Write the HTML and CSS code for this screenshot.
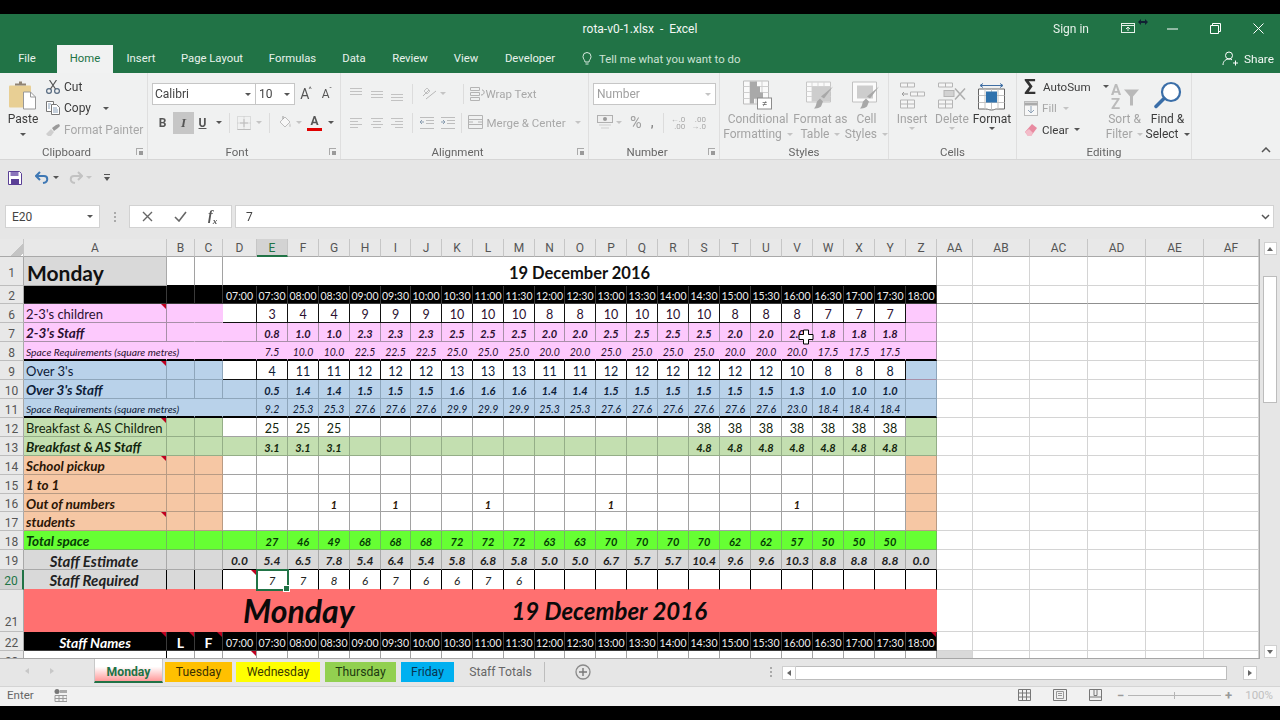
FILE: index.html
```html
<!DOCTYPE html>
<html lang="en">
<head>
<meta charset="utf-8">
<title>rota-v0-1.xlsx - Excel</title>
<link rel="stylesheet" href="styles.css">
</head>
<body>
<div class="app">
  <header class="titlebar">
    <div class="t-left"></div>
    <div class="t-title">rota-v0-1.xlsx &nbsp;-&nbsp; Excel</div>
    <div class="t-right">
      <span class="signin">Sign in</span>
      <svg class="t-disp" width="14" height="11" viewBox="0 0 14 11"><rect x=".5" y=".5" width="13" height="9" fill="none" stroke="#e6f1ea"/><path d="M.5 2.5h13M7 8V4M5 6l2-2 2 2" fill="none" stroke="#e6f1ea"/></svg>
      <svg class="t-resize" width="10" height="6" viewBox="0 0 10 6"><path d="M0 3l3-3v2h4V0l3 3-3 3V4H3v2z" fill="#123"/></svg>
      <svg class="t-min" width="11" height="2" viewBox="0 0 11 2"><path d="M0 1h11" stroke="#fff"/></svg>
      <svg class="t-rest" width="11" height="11" viewBox="0 0 11 11"><path d="M.5 2.5h8v8h-8zM2.5 2.5v-2h8v8h-2" fill="none" stroke="#fff"/></svg>
      <svg class="t-close" width="11" height="11" viewBox="0 0 11 11"><path d="M.5.5l10 10M10.5.5l-10 10" stroke="#fff"/></svg>
    </div>
  </header>

  <nav class="tabsbar">
    <span class="tab tab-file">File</span>
    <span class="tab tab-home">Home</span>
    <span class="tab tab-ins">Insert</span>
    <span class="tab tab-page">Page Layout</span>
    <span class="tab tab-form">Formulas</span>
    <span class="tab tab-data">Data</span>
    <span class="tab tab-rev">Review</span>
    <span class="tab tab-view">View</span>
    <span class="tab tab-dev">Developer</span>
    <span class="tell">
      <svg width="10" height="14" viewBox="0 0 10 14"><path d="M3 10C3 8 1 7 1 4.500a4 4 0 018 0C9 7 7 8 7 10zM3.500 12h3" fill="none" stroke="#d8eadf"/></svg>
      Tell me what you want to do
    </span>
    <span class="share">
      <svg width="16" height="15" viewBox="0 0 16 15"><circle cx="7" cy="4.500" r="3.500" fill="none" stroke="#fff"/><path d="M1 14c0-4 3-6 6-6 1 0 2 .2 3 .8M11 12h5M13.500 9.500v5" fill="none" stroke="#fff"/></svg>
      Share
    </span>
  </nav>

  <section class="ribbon">
    <div class="grp g-clip">
      <div class="body">
        <div class="big b-paste">
          <svg width="28" height="29" viewBox="0 0 28 29"><rect x="0" y="4" width="22" height="22" rx="1" fill="#e8cf94"/><path d="M6 4V2h4V0h3v2h4v2z" fill="#8f8374"/><path d="M14.500 10.500h7l5 5v12h-12z" fill="#fff" stroke="#989898"/><path d="M21.500 10.500v5h5" fill="none" stroke="#989898"/></svg>
          <span class="blabel dark">Paste</span>
          <span class="caret"></span>
        </div>
        <div class="rows3">
          <div class="s-row"><svg width="14" height="14" viewBox="0 0 14 14"><circle cx="3" cy="11" r="2.400" fill="none" stroke="#566a80" stroke-width="1.200"/><circle cx="11" cy="11" r="2.400" fill="none" stroke="#566a80" stroke-width="1.200"/><path d="M4.500 9L10.500 0M9.500 9L3.500 0" stroke="#555" stroke-width="1.200"/></svg><span class="dark">Cut</span></div>
          <div class="s-row"><svg width="14" height="14" viewBox="0 0 14 14"><path d="M.5.5h7v10h-7z" fill="#fff" stroke="#777"/><path d="M5.500 3.500h5l3 3v7h-8z" fill="#fff" stroke="#777"/><path d="M2 3h3M2 5h2M2 7h2M7 7h4M7 9h5M7 11h5" stroke="#8aa0b8"/></svg><span class="dark">Copy</span><span class="caret c-copy"></span></div>
          <div class="s-row muted"><svg width="14" height="12" viewBox="0 0 14 12"><path d="M0 10l5-5 3 3-3 4H2z" fill="#cfcfcf"/><path d="M6 4l4-3 3-1 1 2-2 2-4 3z" fill="#9a9a9a"/></svg><span>Format Painter</span></div>
        </div>
      </div>
      <div class="glabel"><i></i><span>Clipboard</span><b class="launch"></b></div>
    </div>

    <div class="grp g-font">
      <div class="body col2">
        <div class="r22">
          <div class="combo c-font"><span>Calibri</span><span class="caret"></span></div>
          <div class="combo c-size"><span>10</span><span class="caret"></span></div>
          <span class="grow"><span class="gA">A</span><sup>^</sup></span>
          <span class="grow shrink"><span class="gA">A</span><sup>ˇ</sup></span>
        </div>
        <div class="r22 r-fmt">
          <span class="fbtn bold">B</span>
          <span class="fbtn ital on">I</span>
          <span class="fbtn und">U</span>
          <span class="caret cm1"></span>
          <i class="vsep s1"></i>
          <svg class="ic-border" width="14" height="14" viewBox="0 0 14 14"><path d="M.5.5h13v13H.5zM7 .5v13M.5 7h13" fill="none" stroke="#c4c4c4" stroke-dasharray="1 1"/><path d="M.5 13.500h13M7 3v8M3 7h8" stroke="#bdbdbd"/></svg>
          <span class="caret light cm2"></span>
          <i class="vsep s2"></i>
          <svg class="ic-fill" width="15" height="15" viewBox="0 0 15 15"><path d="M3 7l5-5 5 5-5 5z" fill="#f7f7f7" stroke="#bcbcbc"/><path d="M6 4V1" stroke="#999"/><path d="M13 8c1 2 1 4 0 4s-1-2 0-4z" fill="#c8c8c8"/></svg>
          <span class="caret light cm3"></span>
          <span class="fcol">A</span>
          <span class="caret cm4"></span>
        </div>
      </div>
      <div class="glabel"><i></i><span>Font</span><b class="launch"></b></div>
    </div>

    <div class="grp g-align">
      <div class="body col2">
        <div class="r22 al-r1">
          <svg class="ai" width="14" height="14" viewBox="0 0 14 14"><path d="M1 1.500h12M1 4.500h12M1 7.500h12" stroke="#c2c2c2"/></svg>
          <svg class="ai" width="14" height="14" viewBox="0 0 14 14"><path d="M1 4.500h12M1 7.500h12M1 10.500h12" stroke="#c2c2c2"/></svg>
          <svg class="ai" width="14" height="14" viewBox="0 0 14 14"><path d="M1 7.500h12M1 10.500h12M1 13.500h12" stroke="#c2c2c2"/></svg>
          <i class="vsep s3"></i>
          <svg class="orient" width="15" height="14" viewBox="0 0 15 14"><path d="M1 9l6-6M4 12l10-8" stroke="#b8b8b8"/><path d="M2 4l3-3 3 3-3 3z" fill="none" stroke="#c4c4c4"/></svg>
          <span class="caret light cm5"></span>
          <i class="vsep s4"></i>
          <svg class="wr" width="16" height="14" viewBox="0 0 16 14"><path d="M.5.500h9v3h-9zM.5 5.500h9v3h-9zM.5 10.500h9v3h-9z" fill="none" stroke="#b4b4b4"/><path d="M11 8c4 0 4-5 1-5" fill="none" stroke="#a5a5a5"/></svg>
          <span class="muted wtx">Wrap Text</span>
        </div>
        <div class="r22 al-r2">
          <svg class="ai" width="14" height="14" viewBox="0 0 14 14"><path d="M1 2.500h12M1 5.500h8M1 8.500h12M1 11.500h8" stroke="#c2c2c2"/></svg>
          <svg class="ai" width="14" height="14" viewBox="0 0 14 14"><path d="M1 2.500h12M3 5.500h8M1 8.500h12M3 11.500h8" stroke="#c2c2c2"/></svg>
          <svg class="ai" width="14" height="14" viewBox="0 0 14 14"><path d="M1 2.500h12M5 5.500h8M1 8.500h12M5 11.500h8" stroke="#c2c2c2"/></svg>
          <i class="vsep s3"></i>
          <svg class="ind" width="15" height="14" viewBox="0 0 15 14"><path d="M1 1.500h14M7 4.500h8M7 7.500h8M1 12.500h14" stroke="#bdbdbd"/><path d="M5 6H1m2-2L1 6l2 2" fill="none" stroke="#8a9db0"/></svg>
          <svg class="ind i2" width="15" height="14" viewBox="0 0 15 14"><path d="M1 1.500h14M7 4.500h8M7 7.500h8M1 12.500h14" stroke="#bdbdbd"/><path d="M1 6h4M3 4l2 2-2 2" fill="none" stroke="#8a9db0"/></svg>
          <i class="vsep s4b"></i>
          <svg class="wr" width="16" height="15" viewBox="0 0 16 15"><path d="M.5.500h14v13H.5zM.5 4.500h14M.5 9.500h14M5 7H1m13 0h-4" fill="none" stroke="#b4b4b4"/></svg>
          <span class="muted wtx">Merge &amp; Center</span>
          <span class="caret light cm6"></span>
        </div>
      </div>
      <div class="glabel"><i></i><span>Alignment</span><b class="launch"></b></div>
    </div>

    <div class="grp g-num">
      <div class="body col2">
        <div class="r22"><div class="combo c-num"><span>Number</span><span class="caret light"></span></div></div>
        <div class="r22 num-r">
          <svg class="curr" width="16" height="16" viewBox="0 0 16 16"><rect x=".5" y=".5" width="15" height="7" fill="#efefef" stroke="#b0b0b0"/><circle cx="8" cy="4" r="2" fill="#9a9a9a"/><path d="M2 10h12M4 13h8" stroke="#cfcfcf"/></svg>
          <span class="caret light cm7"></span>
          <span class="pct">%</span>
          <span class="cmm">,</span>
          <i class="vsep s5"></i>
          <span class="dec"><span>←.0</span><span>.00</span></span>
          <span class="dec d2"><span>.00</span><span>→.0</span></span>
        </div>
      </div>
      <div class="glabel"><i></i><span>Number</span><b class="launch"></b></div>
    </div>

    <div class="grp g-styles">
      <div class="body row">
        <div class="big w-cf">
          <svg width="30" height="30" viewBox="0 0 30 30"><path d="M.5.500h25v23H.5z" fill="#fafafa" stroke="#bdbdbd"/><path d="M.5 6h25M.5 12h25M.5 18h25M7 .5v23M13 .5v23M19 .5v23" stroke="#cfcfcf"/><path d="M7 1h7v5H7zM7 6h10v6H7zM7 12h13v6H7zM7 18h4v5H7z" fill="#a9a9a9"/><rect x="14.500" y="17.500" width="14" height="11" fill="#fff" stroke="#8c8c8c"/><text x="21.500" y="26.500" font-size="10" text-anchor="middle" fill="#666" font-family="Roboto">≠</text></svg>
          <span class="blabel">Conditional</span><span class="blabel">Formatting<span class="caret light inl"></span></span>
        </div>
        <div class="big w-ft">
          <svg width="28" height="30" viewBox="0 0 28 30"><path d="M.5 1.500h24v20H.5z" fill="#fafafa" stroke="#c6c6c6"/><path d="M.5 6h24M.5 11h24M.5 16h24M6 1.500v20M12 1.500v20M18 1.500v20" stroke="#d6d6d6"/><path d="M6 6h18v15H6z" fill="#cdcdcd"/><path d="M27 6L18 18l-3-2zM14 18l3 3-2 5c-3 2-5 2-7 2 2-2 2-4 3-7z" fill="#a8a8a8"/></svg>
          <span class="blabel">Format as</span><span class="blabel">Table<span class="caret light inl"></span></span>
        </div>
        <div class="big w-cs">
          <svg width="28" height="30" viewBox="0 0 28 30"><path d="M.5 1.500h24v20H.5z" fill="#fbfbfb" stroke="#c0c0c0"/><path d="M5 5h16v13H5z" fill="#cdcdcd"/><path d="M27 6L18 18l-3-2zM14 18l3 3-2 5c-3 2-5 2-7 2 2-2 2-4 3-7z" fill="#a8a8a8"/></svg>
          <span class="blabel">Cell</span><span class="blabel">Styles<span class="caret light inl"></span></span>
        </div>
      </div>
      <div class="glabel center"><span>Styles</span></div>
    </div>

    <div class="grp g-cells">
      <div class="body row">
        <div class="big w-c">
          <svg width="26" height="28" viewBox="0 0 26 28"><path d="M1.500 1.500h14v4h-14zM8.500 1.500v4M11.500 10.500h14v4h-14zM18.500 10.500v4M1.500 18.500h14v8h-14zM8.500 18.500v8M1.500 22.500h14" fill="#f5f5f5" stroke="#b5b5b5"/><path d="M9 12.500H3M5 10.500l-2 2 2 2" fill="none" stroke="#9c9c9c"/></svg>
          <span class="blabel">Insert</span><span class="caret light"></span>
        </div>
        <div class="big w-c">
          <svg width="30" height="28" viewBox="0 0 30 28"><path d="M1.500 1.500h14v4h-14zM8.500 1.500v4M1.500 18.500h14v8h-14zM8.500 18.500v8M1.500 22.500h14" fill="#f5f5f5" stroke="#b5b5b5"/><rect x="7" y="9" width="10" height="6" fill="#d2d2d2" stroke="#b5b5b5"/><path d="M18 7l10 11M28 7L18 18" stroke="#aeaeae" stroke-width="1.500"/></svg>
          <span class="blabel">Delete</span><span class="caret light"></span>
        </div>
        <div class="big w-c">
          <svg width="28" height="30" viewBox="0 0 28 30"><path d="M2.500 5h22M5 3L2 5l3 2M22 3l3 2-3 2" fill="none" stroke="#3f6ea3"/><path d="M.5 8.500h26v20h-8c-2 0-2 1-5 1s-3-1-6-1H.5z" fill="#fff" stroke="#666"/><path d="M7 8.500v20M20 8.500v20M.5 15h26M.5 22h26M13.500 8.500v20" stroke="#c3c3c3"/><rect x="8" y="11" width="11" height="11" fill="#2f72ad"/></svg>
          <span class="blabel dark">Format</span><span class="caret"></span>
        </div>
      </div>
      <div class="glabel center"><span>Cells</span></div>
    </div>

    <div class="grp g-edit">
      <div class="body row">
        <div class="rows3 ed3">
          <div class="s-row sig"><span class="sigma">Σ</span><span class="dark">AutoSum</span><span class="caret c-auto"></span></div>
          <div class="s-row muted"><svg width="14" height="15" viewBox="0 0 14 15"><rect x=".5" y=".5" width="13" height="14" fill="#f7f7f7" stroke="#bbb"/><path d="M.5 3h13" stroke="#aaa" stroke-width="3"/><path d="M7 5v7M4 9l3 3 3-3" fill="none" stroke="#8fa3b8"/></svg><span>Fill</span><span class="caret light c-fill"></span></div>
          <div class="s-row"><svg width="14" height="14" viewBox="0 0 14 14"><path d="M1 9l7-8 5 4-6 8H4z" fill="#e88aa0"/><path d="M1 9l3 4h3l2-3-4-4z" fill="#f3bcc9"/></svg><span class="dark">Clear</span><span class="caret c-clear"></span></div>
        </div>
        <div class="big w-sf">
          <svg width="30" height="28" viewBox="0 0 30 28"><text x="1" y="13" font-size="15" fill="#bbb" font-family="Roboto" font-weight="700">A</text><text x="1" y="27" font-size="15" fill="#bbb" font-family="Roboto" font-weight="700">Z</text><path d="M14 8h15l-6 7v9h-3v-9z" fill="#b9b9b9"/></svg>
          <span class="blabel">Sort &amp;</span><span class="blabel">Filter<span class="caret light inl"></span></span>
        </div>
        <div class="big w-fs">
          <svg width="28" height="28" viewBox="0 0 28 28"><circle cx="17" cy="10.500" r="9" fill="#fff" stroke="#3a6ea8" stroke-width="2.200"/><path d="M10 17L2 25" stroke="#3a6ea8" stroke-width="3.500" stroke-linecap="round"/></svg>
          <span class="blabel dark">Find &amp;</span><span class="blabel dark">Select<span class="caret inl"></span></span>
        </div>
      </div>
      <div class="glabel center"><span>Editing</span></div>
    </div>

    <div class="collapse"><svg width="10" height="6" viewBox="0 0 10 6"><path d="M1 5l4-4 4 4" fill="none" stroke="#555" stroke-width="1.500"/></svg></div>
  </section>

  <div class="qat">
    <svg width="14" height="14" viewBox="0 0 14 14"><path d="M.5.500h11l2 2v11H.5z" fill="#fff" stroke="#5a3f96"/><path d="M2.500 1h8v4h-8z" fill="#8c76bb"/><path d="M3 8h8v5.500H3z" fill="#5a3f96"/></svg>
    <svg class="q-undo" width="15" height="13" viewBox="0 0 15 13"><path d="M5 1L1 5l4 4" fill="none" stroke="#3f78b4" stroke-width="2"/><path d="M1 5h8c4 0 5 6-1 7" fill="none" stroke="#3f78b4" stroke-width="2"/></svg>
    <span class="caret c-u"></span>
    <svg class="q-redo" width="15" height="13" viewBox="0 0 15 13"><path d="M10 1l4 4-4 4" fill="none" stroke="#c2c2c2" stroke-width="2"/><path d="M14 5H6C2 5 1 11 7 12" fill="none" stroke="#c2c2c2" stroke-width="2"/></svg>
    <span class="caret light c-r"></span>
    <svg class="q-cust" width="6" height="7" viewBox="0 0 6 7"><path d="M0 .5h6" stroke="#555"/><path d="M0 3h6l-3 4z" fill="#555"/></svg>
  </div>

  <div class="fbar">
    <div class="namebox"><span>E20</span><span class="caret"></span></div>
    <span class="grip"></span>
    <div class="fxbox">
      <svg width="11" height="11" viewBox="0 0 11 11"><path d="M1 1l9 9M10 1l-9 9" stroke="#666" stroke-width="1.400"/></svg>
      <svg width="13" height="11" viewBox="0 0 13 11"><path d="M1 6l4 4 7-9" fill="none" stroke="#666" stroke-width="1.600"/></svg>
      <span class="fx">f<sub>x</sub></span>
    </div>
    <div class="finput"><span>7</span><svg width="9" height="6" viewBox="0 0 9 6"><path d="M1 1l3.500 3.500L8 1" fill="none" stroke="#555" stroke-width="1.500"/></svg></div>
  </div>

  <main class="sheetarea">
    <div class="gridwrap">
      <table class="sheet">
        <colgroup>
          <col class="w24"><col class="w143"><col class="w28"><col class="w28"><col class="w34">
          <col class="w31"><col class="w31"><col class="w31"><col class="w31"><col class="w30"><col class="w31"><col class="w31"><col class="w31"><col class="w31"><col class="w30"><col class="w31"><col class="w31"><col class="w31"><col class="w31"><col class="w31"><col class="w31"><col class="w31"><col class="w31"><col class="w31"><col class="w31"><col class="w31"><col class="w31">
          <col class="w36"><col class="w57"><col class="w58"><col class="w58"><col class="w58"><col class="w55">
        </colgroup>
        <tr class="chead"><th class="corner"><th>A<th>B<th>C<th>D<th class="csel">E<th>F<th>G<th>H<th>I<th>J<th>K<th>L<th>M<th>N<th>O<th>P<th>Q<th>R<th>S<th>T<th>U<th>V<th>W<th>X<th>Y<th>Z<th>AA<th>AB<th>AC<th>AD<th>AE<th>AF</tr>
        <tr class="h29 first"><th>1<td class="mon">Monday<td><td><td class="ttl" colspan="23">19 December 2016<td class="e"><td class="e"><td class="e"><td class="e"><td class="e"><td class="e"></tr>
        <tr class="h18 kk"><th>2<td><td><td><td>07:00<td>07:30<td>08:00<td>08:30<td>09:00<td>09:30<td>10:00<td>10:30<td>11:00<td>11:30<td>12:00<td>12:30<td>13:00<td>13:30<td>14:00<td>14:30<td>15:00<td>15:30<td>16:00<td>16:30<td>17:00<td>17:30<td>18:00<td><td><td><td><td><td></tr>
        <tr class="h19 pink box num"><th>6<td class="lab cm">2-3's children<td><td><td><td>3<td>4<td>4<td>9<td>9<td>9<td>10<td>10<td>10<td>8<td>8<td>10<td>10<td>10<td>10<td>8<td>8<td>8<td>7<td>7<td>7<td><td><td><td><td><td><td></tr>
        <tr class="h19 pink bi"><th>7<td class="lab">2-3's Staff<td><td><td><td>0.8<td>1.0<td>1.0<td>2.3<td>2.3<td>2.3<td>2.5<td>2.5<td>2.5<td>2.0<td>2.0<td>2.5<td>2.5<td>2.5<td>2.5<td>2.0<td>2.0<td>2.0<td>1.8<td>1.8<td>1.8<td><td><td><td><td><td><td></tr>
        <tr class="h19 pink it thick"><th>8<td class="lab tiny nr">Space Requirements (square metres)<td class="nr"><td class="nr"><td class="nr"><td class="nr">7.5<td class="nr">10.0<td class="nr">10.0<td class="nr">22.5<td class="nr">22.5<td class="nr">22.5<td class="nr">25.0<td class="nr">25.0<td class="nr">25.0<td class="nr">20.0<td class="nr">20.0<td class="nr">25.0<td class="nr">25.0<td class="nr">25.0<td class="nr">25.0<td class="nr">20.0<td class="nr">20.0<td class="nr">20.0<td class="nr">17.5<td class="nr">17.5<td class="nr">17.5<td><td><td><td><td><td><td></tr>
        <tr class="h19 blue box num"><th>9<td class="lab cm">Over 3's<td><td><td><td>4<td>11<td>11<td>12<td>12<td>12<td>13<td>13<td>13<td>11<td>11<td>12<td>12<td>12<td>12<td>12<td>12<td>10<td>8<td>8<td>8<td><td><td><td><td><td><td></tr>
        <tr class="h19 blue bi"><th>10<td class="lab">Over 3's Staff<td><td><td><td>0.5<td>1.4<td>1.4<td>1.5<td>1.5<td>1.5<td>1.6<td>1.6<td>1.6<td>1.4<td>1.4<td>1.5<td>1.5<td>1.5<td>1.5<td>1.5<td>1.5<td>1.3<td>1.0<td>1.0<td>1.0<td><td><td><td><td><td><td></tr>
        <tr class="h19 blue it thick"><th>11<td class="lab tiny nr">Space Requirements (square metres)<td class="nr"><td class="nr"><td><td>9.2<td>25.3<td>25.3<td>27.6<td>27.6<td>27.6<td>29.9<td>29.9<td>29.9<td>25.3<td>25.3<td>27.6<td>27.6<td>27.6<td>27.6<td>27.6<td>27.6<td>23.0<td>18.4<td>18.4<td>18.4<td><td><td><td><td><td><td></tr>
        <tr class="h19 green wmid num"><th>12<td class="lab cm">Breakfast &amp; AS Children<td><td><td><td>25<td>25<td>25<td><td><td><td><td><td><td><td><td><td><td><td>38<td>38<td>38<td>38<td>38<td>38<td>38<td><td><td><td><td><td><td></tr>
        <tr class="h19 green bi"><th>13<td class="lab">Breakfast &amp; AS Staff<td><td><td><td>3.1<td>3.1<td>3.1<td><td><td><td><td><td><td><td><td><td><td><td>4.8<td>4.8<td>4.8<td>4.8<td>4.8<td>4.8<td>4.8<td><td><td><td><td><td><td></tr>
        <tr class="h19 orange wmid bi"><th>14<td class="lab cm">School pickup<td><td><td><td><td><td><td><td><td><td><td><td><td><td><td><td><td><td><td><td><td><td><td><td><td><td><td><td><td><td><td></tr>
        <tr class="h19 orange wmid bi"><th>15<td class="lab">1 to 1<td><td><td><td><td><td><td><td><td><td><td><td><td><td><td><td><td><td><td><td><td><td><td><td><td><td><td><td><td><td><td></tr>
        <tr class="h18 orange wmid bi"><th>16<td class="lab">Out of numbers<td><td><td><td><td><td>1<td><td>1<td><td><td>1<td><td><td><td>1<td><td><td><td><td><td>1<td><td><td><td><td><td><td><td><td><td></tr>
        <tr class="h19 orange wmid bi"><th>17<td class="lab cm">students<td><td><td><td><td><td><td><td><td><td><td><td><td><td><td><td><td><td><td><td><td><td><td><td><td><td><td><td><td><td><td></tr>
        <tr class="h19 lime bi"><th>18<td class="lab">Total space<td><td><td><td>27<td>46<td>49<td>68<td>68<td>68<td>72<td>72<td>72<td>63<td>63<td>70<td>70<td>70<td>70<td>62<td>62<td>57<td>50<td>50<td>50<td><td><td><td><td><td><td></tr>
        <tr class="h20 est bi2"><th>19<td class="lab2">Staff Estimate<td><td><td>0.0<td>5.4<td>6.5<td>7.8<td>5.4<td>6.4<td>5.4<td>5.8<td>6.8<td>5.8<td>5.0<td>5.0<td>6.7<td>5.7<td>5.7<td>10.4<td>9.6<td>9.6<td>10.3<td>8.8<td>8.8<td>8.8<td>0.0<td><td><td><td><td><td></tr>
        <tr class="h20 req it2"><th class="rsel">20<td class="lab2">Staff Required<td><td><td class="cm"><td class="sel">7<td>7<td>8<td>6<td>7<td>6<td>6<td>7<td>6<td><td><td><td><td><td><td><td><td><td><td><td><td><td><td><td><td><td><td></tr>
        <tr class="h42 banner-row"><th class="th-bottom">21<td class="banner" colspan="26"><div class="banner-in"><span class="b-mon">Monday</span><span class="b-date">19 December 2016</span></div><td class="e"><td class="e"><td class="e"><td class="e"><td class="e"><td class="e"></tr>
        <tr class="h19 kk k22"><th>22<td class="lab3 cm">Staff Names<td class="bb cm">L<td class="bb cm">F<td>07:00<td>07:30<td>08:00<td>08:30<td>09:00<td>09:30<td>10:00<td>10:30<td>11:00<td>11:30<td>12:00<td>12:30<td>13:00<td>13:30<td>14:00<td>14:30<td>15:00<td>15:30<td>16:00<td>16:30<td>17:00<td>17:30<td class="cm">18:00<td><td><td><td><td><td></tr>
        <tr class="h19 last bi2"><th class="th-top">23<td class="lab2">Sara Davis<td>2<td>Y<td class="cm"><td><td><td><td><td><td><td>1<td>1<td><td><td><td><td><td><td><td><td><td><td><td><td><td><td class="ggy">1<td><td><td><td><td></tr>
      </table>
      <svg class="pointer" width="16" height="16" viewBox="0 0 16 16"><path d="M5.500 1h5v4.500H15v5h-4.500V15h-5v-4.500H1v-5h4.500z" fill="#fff" stroke="#000"/></svg>
    </div>
    <aside class="vbar">
      <span class="vbtn"><i class="up"></i></span>
      <span class="vthumb"></span>
      <span class="vbtn vdown"><i class="down"></i></span>
    </aside>
  </main>

  <div class="sheettabs">
    <div class="tabnav"><i class="nl"></i><i class="nr2"></i></div>
    <span class="st st-mon">Monday</span>
    <span class="st st-tue">Tuesday</span>
    <span class="st st-wed">Wednesday</span>
    <span class="st st-thu">Thursday</span>
    <span class="st st-fri">Friday</span>
    <span class="st st-tot">Staff Totals</span>
    <svg class="st-add" width="16" height="16" viewBox="0 0 16 16"><circle cx="8" cy="8" r="7" fill="none" stroke="#8a8a8a" stroke-width="1.300"/><path d="M8 4v8M4 8h8" stroke="#777" stroke-width="1.400"/></svg>
    <span class="grip g2"></span>
    <div class="hbar">
      <span class="hbtn"><i class="hl"></i></span>
      <span class="hthumb"></span>
      <span class="hbtn hright"><i class="hr"></i></span>
    </div>
  </div>

  <footer class="status">
    <span class="st-enter">Enter</span>
    <svg class="st-macro" width="13" height="13" viewBox="0 0 13 13"><circle cx="3" cy="2.500" r="2.500" fill="#777"/><path d="M6 1h7v3H6z" fill="#aaa"/><path d="M1 6.500h12v6H1zM5 6.500v6M9 6.500v6M1 9.500h12" fill="none" stroke="#999"/></svg>
    <span class="st-right">
      <svg width="13" height="12" viewBox="0 0 13 12"><path d="M.5.500h12v11H.5zM.5 4h12M.5 8h12M4.500.5v11M8.500.5v11" fill="none" stroke="#777"/></svg>
      <svg width="14" height="12" viewBox="0 0 14 12"><path d="M.5.500h13v11H.5z" fill="none" stroke="#777"/><path d="M3.500 2.500h7v7h-7zM5 4.500h4M5 6.500h4" fill="none" stroke="#999"/></svg>
      <svg class="v-last" width="13" height="12" viewBox="0 0 13 12"><path d="M.5.500h12v11H.5zM5 .5v6h3v-6M.5 8h12" fill="none" stroke="#777"/></svg>
      <span class="zm">−</span>
      <span class="slider"><i></i></span>
      <span class="zm">+</span>
      <span class="zpct">100%</span>
    </span>
  </footer>
</div>
</body>
</html>
```
FILE: styles.css
```css
* { box-sizing: border-box; }
html, body { margin: 0; height: 100%; overflow: hidden; background: #000; }
body { font: 12px Roboto, "Open Sans", sans-serif; color: #444; }
.app { height: 720px; padding: 14px 0; display: flex; flex-direction: column; filter: blur(.4px); }

/* title bar */
.titlebar { height: 30px; background: #217346; color: #fff; display: grid; grid-template-columns: 1fr auto 1fr; align-items: center; }
.t-title { font-size: 12px; color: #f2f7f4; }
.t-right { display: flex; align-items: center; justify-content: flex-end; position: relative; height: 100%; }
.signin { font-size: 12px; margin-right: 32px; color: #e6f1ea; }
.t-disp { margin-right: 32px; }
.t-resize { position: absolute; right: 132px; top: 5px; }
.t-min { margin-right: 32px; }
.t-rest { margin-right: 32px; }
.t-close { margin-right: 16px; }

.tabsbar { height: 29px; background: #217346; display: flex; align-items: stretch; color: #e8f2ec; }
.tab { display: flex; align-items: center; justify-content: center; font-size: 11.300px; padding-top: 1px; }
.tab-file { width: 57px; padding-right: 3px; }
.tab-home { width: 56px; background: #f1f2f2; color: #217346; margin-top: 1px; padding-top: 0; }
.tab-ins { width: 56px; }
.tab-page { width: 86px; }
.tab-form { width: 75px; }
.tab-data { width: 48px; }
.tab-rev { width: 64px; }
.tab-view { width: 48px; }
.tab-dev { width: 80px; }
.tell { display: flex; align-items: center; gap: 7px; margin-left: 12px; padding-top: 1px; color: #cbe2d4; font-size: 11.400px; }
.share { margin-left: auto; display: flex; align-items: center; gap: 6px; margin-right: 6px; padding-top: 1px; color: #f2f7f4; font-size: 11.800px; }

/* ribbon */
.ribbon { height: 87px; background: #f0f1f1; border-bottom: 1px solid #d6d6d6; display: flex; position: relative; font-size: 12px; color: #a4a4a4; }
.grp { display: flex; flex-direction: column; border-right: 1px solid #dfdfdf; }
.g-clip { width: 148px; }
.g-font { width: 193px; }
.g-align { width: 248px; }
.g-num { width: 131px; }
.g-styles { width: 169px; }
.g-cells { width: 128px; }
.g-edit { width: 175px; }
.body { height: 72px; display: flex; }
.body.col2 { flex-direction: column; padding-top: 10px; gap: 7px; }
.body.row { padding-top: 5px; }
.g-clip .body { padding-top: 3.500px; }
.glabel { height: 14px; display: grid; grid-template-columns: 1fr auto 1fr; align-items: center; color: #666; font-size: 11.500px; line-height: 14px; padding-right: 14px; }
.glabel.center { grid-template-columns: 1fr; justify-items: center; padding-right: 0; }
.launch { justify-self: end; width: 7px; height: 7px; margin-right: -10px; border: 1px solid #aaa; border-width: 1px 0 0 1px; position: relative; }
.launch::after { content: ""; position: absolute; right: 0; bottom: 0; width: 4px; height: 4px; background: #9a9a9a; }
.caret { display: inline-block; width: 0; height: 0; border: 3px solid transparent; border-top: 3.500px solid #555; border-bottom: 0; flex: none; }
.caret.light { border-top-color: #c4c4c4; }
.caret.inl { margin-left: 5px; vertical-align: middle; }
.dark { color: #3c3c3c; }
.muted { color: #a8a8a8; }
.big { display: flex; flex-direction: column; align-items: center; line-height: 15px; white-space: nowrap; }
.big svg { height: 34px; padding: 2px 0 1px; flex: none; }
.blabel { display: block; }
.b-paste { width: 46px; }
.b-paste svg { height: 30px; padding: 0; margin-top: 4.500px; margin-bottom: 1px; }
.b-paste .caret { margin-top: 6px; }
.rows3 { display: flex; flex-direction: column; padding-top: 0; }
.s-row { height: 21.500px; display: flex; align-items: center; gap: 4px; }
.s-row svg { flex: none; }
.c-copy { margin-left: 8px; }

/* font group */
.r22 { display: flex; align-items: center; height: 22px; }
.g-font .body { padding-left: 4px; }
.combo { height: 22px; background: #fff; border: 1px solid #c6c6c6; display: flex; align-items: center; justify-content: space-between; padding: 1px 4px 0 2px; color: #444; font-size: 12px; }
.c-font { width: 104px; }
.c-size { width: 40px; margin-left: -1px; padding-left: 3px; }
.grow { width: 20px; display: flex; justify-content: center; color: #555; font-size: 14px; margin-left: 1px; }
.grow sup { font-size: 8px; line-height: 8px; margin-left: -1px; }
.shrink { font-size: 12px; }
.fbtn { width: 21px; height: 22px; display: flex; align-items: center; justify-content: center; color: #555; font-family: "Liberation Serif", serif; font-size: 13px; }
.bold { font-family: Roboto, sans-serif; font-weight: 700; font-size: 12px; }
.ital { font-style: italic; font-weight: 700; }
.ital.on { background: #c6c6c6; }
.und { font-family: Roboto, sans-serif; font-weight: 700; font-size: 12px; text-decoration: underline; margin-left: -2px; }
.cm1 { margin-left: 3px; }
.vsep { width: 1px; height: 20px; background: #dcdcdc; display: block; flex: none; }
.s1 { margin-left: 7px; }
.ic-border { margin-left: 7px; }
.cm2 { margin-left: 5px; }
.s2 { margin-left: 7px; }
.ic-fill { margin-left: 7px; }
.cm3 { margin-left: 4px; }
.fcol { margin-left: 5px; width: 15px; text-align: center; color: #555; font-weight: 700; font-size: 12px; line-height: 13px; border-bottom: 3px solid #e00000; }
.cm4 { margin-left: 6px; }

/* alignment */
.al-r1, .al-r2 { padding-left: 8px; }
.ai { margin-right: 6.500px; flex: none; }
.s3 { margin-left: 1px; }
.orient { margin-left: 9px; }
.cm5 { margin-left: 3px; }
.s4 { margin-left: 17px; }
.s4b { margin-left: 6px; }
.wr { margin-left: 6px; flex: none; }
.wtx { margin-left: 3px; padding-top: 1px; font-size: 11.500px; }
.al-r1 .wtx { margin-left: 0; }
.ind { margin-left: 6px; flex: none; }
.i2 { margin-left: 6px; }
.cm6 { margin-left: 9px; }

/* number */
.g-num .body { padding-left: 4px; }
.c-num { width: 123px; color: #a0a0a0; padding-left: 3px; }
.num-r { color: #a8a8a8; }
.curr { margin-left: 4px; }
.cm7 { margin-left: 3px; }
.pct { margin-left: 8px; font-size: 16px; color: #a0a0a0; }
.cmm { margin-left: 9px; font-weight: 700; font-size: 12px; color: #888; }
.s5 { margin-left: 9px; }
.dec { display: flex; flex-direction: column; font-size: 8px; line-height: 7px; margin-left: 7px; align-items: flex-end; }
.d2 { margin-left: 6px; }

/* styles */
.w-cf { width: 66px; margin-left: 5px; }
.w-ft { width: 60px; margin-left: 1px; }
.w-cs { width: 44px; margin-left: -4px; }
.g-cells .body { padding-left: 3px; }
.w-c { width: 40px; }
.ed3 { width: 94px; padding-left: 7px; padding-top: 0; margin-top: -1.500px; font-size: 11.600px; }
.sig { gap: 4px; }
.sigma { font-size: 21px; font-weight: 700; color: #333; width: 15px; line-height: 20px; }
.c-auto { margin-left: 8px; }
.c-fill { margin-left: 2px; }
.c-clear { margin-left: 1px; }
.w-sf { width: 40px; margin-left: -4px; }
.w-fs { width: 48px; margin-left: 0; }
.collapse { position: absolute; right: 9px; bottom: 3px; }

/* quick access */
.qat { height: 46px; background: #e6e6e6; display: flex; align-items: center; padding: 0 0 10px 8px; }
.q-undo { margin-left: 13px; }
.c-u { margin-left: 3px; }
.q-redo { margin-left: 9px; }
.c-r { margin-left: 3px; }
.q-cust { margin-left: 12px; }

/* formula bar */
.fbar { height: 23px; background: #e6e6e6; display: flex; padding: 0 6px 0 5px; margin-bottom: 11px; box-shadow: 0 11px 0 #e6e6e6; }
.namebox { width: 95px; background: #fff; border: 1px solid #d2d2d2; display: flex; align-items: center; justify-content: space-between; padding: 0 6px; color: #444; font-size: 12px; }
.grip { width: 2px; height: 10px; margin: 7px 13px 0 14px; background: repeating-linear-gradient(#aaa 0 2px, transparent 2px 4px); }
.fxbox { width: 103px; background: #fff; border: 1px solid #d2d2d2; display: flex; align-items: center; padding-left: 12px; gap: 21px; }
.fx { font-family: "Liberation Serif", serif; font-style: italic; font-size: 14px; color: #555; font-weight: 700; }
.fx sub { font-size: 9px; }
.finput { flex: 1; margin-left: 3px; background: #fff; border: 1px solid #d2d2d2; display: flex; align-items: center; justify-content: space-between; padding: 0 3px 0 10px; font-size: 12px; color: #444; }

/* sheet */
.sheetarea { height: 420px; display: flex; background: #e6e6e6; }
.gridwrap { width: 1260px; height: 420px; overflow: hidden; position: relative; background: #fff; border-right: 1px solid #a6a6a6; border-bottom: 1px solid #a6a6a6; }
.sheet { border-collapse: separate; border-spacing: 0; table-layout: fixed; width: 1259px; font-family: Lato, "Open Sans", sans-serif; }
.w24 { width: 24px; } .w143 { width: 143px; } .w28 { width: 28px; } .w34 { width: 34px; } .w30 { width: 30px; } .w31 { width: 31px; } .w36 { width: 36px; } .w57 { width: 57px; } .w58 { width: 58px; } .w55 { width: 55px; }
.sheet th { padding: 3px 0 0; background: #e8e8e8; color: #555; font: 12px/1 Roboto, sans-serif; border-right: 1px solid #a9a9a9; border-bottom: 1px solid #bdbdbd; }
.sheet td { padding: 3px 0 0; border-right: 1px solid #a2a2a2; border-bottom: 1px solid #a2a2a2; font-size: 13px; line-height: 1; text-align: center; white-space: nowrap; color: #222; }
.sheet .th-bottom { vertical-align: bottom; padding-bottom: 3px; }
.sheet .th-top { vertical-align: top; padding-top: 5px; }
.chead { height: 18px; }
.sheet .chead th { border-right: 1px solid #c6c6c6; font-size: 12px; border-bottom: 1px solid #a9a9a9; padding-top: 1px; }
.sheet .corner { background: linear-gradient(315deg, transparent 2px, #c4c4c4 2px, #c4c4c4 9px, #e8e8e8 9px); }
.sheet .chead .csel { background: #d3d3d3; color: #217346; border-bottom: 2px solid #217346; }
.rsel { background: #d3d3d3 !important; color: #217346 !important; border-right: 2px solid #217346 !important; }
.h18 { height: 18px; } .h19 { height: 19px; } .h20 { height: 20px; } .h29 { height: 29px; } .h42 { height: 42px; }

.pink td { background: #fdc9fd; border-color: #a88fa8; color: #2b1030; }
.pink td:nth-child(3), .pink td:nth-child(4) { border-right-color: transparent; }
.blue td { background: #b9d2ea; border-color: #8ea6bb; color: #0d2038; }
.green td { background: #c3dfb0; border-color: #94ae87; color: #12250c; }
.orange td { background: #f6c7a4; border-color: #b89b84; color: #2b1606; }
.lime td { background: #66ff33; border-color: #6fba5a; color: #053b05; }
.est td { background: #d9d9d9; border-color: #a9a9a9; border-bottom-color: #000; }
.est td:nth-child(-n+4) { border-bottom-color: #a9a9a9; }
.kk td { background: #000; color: #eee; border-color: #3a3a3a; font-size: 10.500px; }
.k22 td { padding-top: 4px; }
.req td { background: #fff; border-color: #000; border-bottom-color: #ff7070; padding-top: 1px; }
.req td:nth-child(-n+4) { background: #d9d9d9; }
.first td { background: #fff; border-bottom-color: #000; }

.box td:nth-child(n+5):nth-child(-n+26), .wmid td:nth-child(n+5):nth-child(-n+26) { background: #fff; }
.box td:nth-child(n+5):nth-child(-n+26) { border-bottom-color: #111; }
.box td:nth-child(n+5):nth-child(-n+25) { border-right-color: #111; }
.wmid td:nth-child(n+5):nth-child(-n+26) { border-color: #a2a2a2; }
.box td:nth-child(5), .box td:nth-child(26) { border-right-color: #111; }
.box td:nth-child(27) { border-bottom-color: #a88fa8; }
.box td:nth-child(5) { border-bottom-color: #d0d0d0; }
.num td { font-size: 12.500px; }
.bi td { font-weight: 700; font-style: italic; font-size: 11px; }
.it td { font-style: italic; font-size: 10.500px; }
.bi2 td { font-weight: 700; font-style: italic; font-size: 12px; }
.it2 td { font-style: italic; font-size: 11.500px; }
.thick td { border-bottom: 2px solid #000; }
.thick td:nth-child(n+28) { border-bottom: 1px solid #d4d4d4; }
.kk.h18 td:nth-child(n+28) { border-bottom-color: #8f8f8f; }

.sheet td.lab, .sheet td.lab2 { text-align: left; padding-left: 2px; font-size: 13px; }
.bi td.lab { font-size: 13.500px; }
.sheet td.tiny { font-size: 10.300px; }
.sheet td.lab2 { text-align: center; font-size: 15px; font-weight: 700; font-style: italic; padding-left: 0; padding-right: 2px; }
.sheet td.lab3 { font-size: 14px; font-weight: 700; font-style: italic; color: #fff; }
.sheet td.bb { font-size: 14px; font-weight: 700; color: #fff; }
.nr { border-right-color: transparent !important; }

.sheet td.mon { background: #d9d9d9; text-align: left; padding-left: 3px; font-size: 21px; font-weight: 700; color: #111; border-color: #a9a9a9; }
.sheet td.ttl { font-size: 16.500px; font-weight: 700; color: #111; padding-top: 4px; }
.sheet td.e, tr td:nth-child(n+28) { background: #fff; border-color: #d4d4d4; color: #333; }

.sheet td.banner { background: #ff7070; border-color: #ff7070; padding-top: 1px; }
.banner-in { display: flex; align-items: center; padding-left: 219px; gap: 157px; color: #0a0a0a; font-weight: 700; font-style: italic; }
.b-mon { font-size: 32px; }
.b-date { font-size: 24px; }

.last td { background: #fff; vertical-align: top; padding-top: 5px; border-color: #a2a2a2; }
.last td:nth-child(-n+2) { border-color: #000; }
.sheet td.ggy { background: #d9d9d9; }
.sheet .sel { outline: 2px solid #217346; outline-offset: -1px; position: relative; z-index: 2; }
.sheet .sel::after { content: ""; position: absolute; right: -3px; bottom: -3px; width: 5px; height: 5px; background: #217346; border: 1px solid #fff; }
.cm { position: relative; }
.cm::after { content: ""; position: absolute; top: 0; right: 0; border-top: 5px solid #c00020; border-left: 5px solid transparent; }

.pointer { position: absolute; left: 798px; top: 90px; }

/* vertical scroll */
.vbar { width: 20px; display: flex; flex-direction: column; align-items: center; padding: 3px 0 1px; }
.vbtn { width: 13px; height: 13px; background: #fff; border: 1px solid #d0d0d0; display: flex; align-items: center; justify-content: center; }
.up { border: 3px solid transparent; border-bottom: 4px solid #666; border-top: 0; }
.down { border: 3px solid transparent; border-top: 4px solid #666; border-bottom: 0; }
.vthumb { width: 14px; height: 127px; margin-top: 21px; background: #fff; border: 1px solid #bdbdbd; }
.vdown { margin-top: auto; }

/* sheet tabs */
.sheettabs { height: 27px; background: #e6e6e6; display: flex; align-items: flex-start; font-size: 12.200px; }
.tabnav { width: 94px; height: 24px; display: flex; align-items: center; padding-left: 25px; gap: 21px; }
.tabnav i { border: 3px solid transparent; }
.nl { border-right: 4px solid #c8c8c8 !important; border-left: 0 !important; }
.nr2 { border-left: 4px solid #c8c8c8 !important; border-right: 0 !important; }
.st { display: flex; align-items: center; justify-content: center; height: 20px; margin-top: 3px; color: #333; flex: none; }
.st-mon { width: 69px; height: 24px; margin-top: 0; padding-top: 3px; background: linear-gradient(#fff 35%, #ff9a9a); color: #217346; font-weight: 700; border-bottom: 2px solid #217346; border-left: 1px solid #c8c8c8; border-right: 1px solid #c8c8c8; }
.st-tue { width: 67px; background: #ffc000; margin-left: 2px; color: #3a3000; }
.st-wed { width: 84px; background: #ffff00; margin-left: 4px; color: #3a3a00; }
.st-thu { width: 71px; background: #92d050; margin-left: 5px; color: #1d3a10; }
.st-fri { width: 53px; background: #00b0f0; margin-left: 5px; color: #083550; }
.st-tot { width: 91px; padding-left: 3px; color: #666; border-right: 1px solid #bdbdbd; }
.st-add { margin: 5px 0 0 30px; }
.g2 { margin: 8px 10px 0 auto; }
.hbar { width: 475px; height: 14px; margin: 7px 23px 0 0; display: flex; }
.hbtn { width: 14px; height: 14px; background: #fff; border: 1px solid #cfcfcf; display: flex; align-items: center; justify-content: center; }
.hl { border: 3px solid transparent; border-right: 4px solid #666; border-left: 0; }
.hr { border: 3px solid transparent; border-left: 4px solid #666; border-right: 0; }
.hthumb { width: 431px; background: #fff; border: 1px solid #bdbdbd; border-left: 0; }
.hright { margin-left: auto; }

/* status */
.status { height: 20px; background: #f1f1f1; border-top: 1px solid #d4d4d4; display: flex; align-items: center; padding: 0 0 3px 7px; font-size: 11.500px; color: #666; }
.st-macro { margin-left: 20px; }
.st-right { margin-left: auto; display: flex; align-items: center; padding-right: 7px; }
.st-right svg { margin-right: 22px; }
.st-right .v-last { margin-right: 15px; }
.zm { font-size: 13px; color: #999; font-weight: 700; }
.slider { width: 93px; height: 1px; background: #b5b5b5; margin: 0 4px; position: relative; }
.slider i { position: absolute; left: 46px; top: -3px; width: 1px; height: 7px; background: #b5b5b5; }
.zpct { margin-left: 13px; color: #c0c0c0; }
```
